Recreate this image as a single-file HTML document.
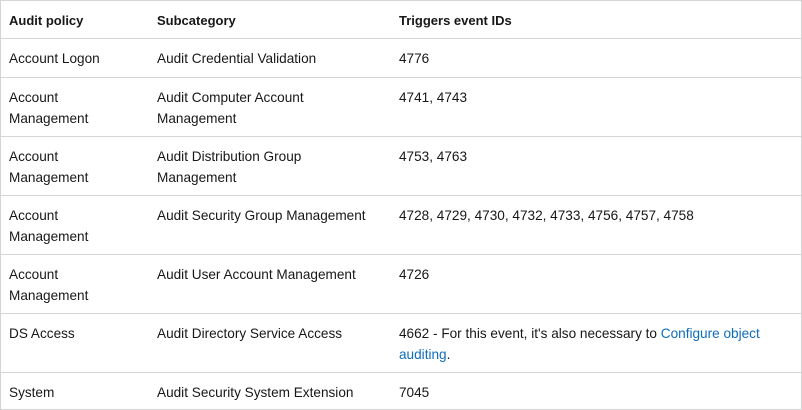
<!DOCTYPE html>
<html><head><meta charset="utf-8"><style>
body{margin:0;background:#fff;font-family:"Liberation Sans",sans-serif;font-size:13.6px;color:#171717;}
.t{position:absolute;left:0;top:0;width:800px;height:408px;border:1px solid #d4d4d4;}
.r{position:absolute;left:0;width:800px;border-bottom:1px solid #d4d4d4;box-sizing:border-box;}
.c{position:absolute;top:9px;line-height:21px;}
.a{left:8px;width:140px}.b{left:156px;width:235px}.d{left:398px;width:395px}
.h{font-weight:bold;font-size:13px}
a{color:#0f6cbd;text-decoration:none}
</style></head><body><div class="t">
<div class="r h" style="top:0;height:38px"><div class="c a">Audit policy</div><div class="c b">Subcategory</div><div class="c d">Triggers event IDs</div></div>
<div class="r" style="top:38px;height:39px"><div class="c a">Account Logon</div><div class="c b">Audit Credential Validation</div><div class="c d">4776</div></div>
<div class="r" style="top:77px;height:59px"><div class="c a">Account<br>Management</div><div class="c b">Audit Computer Account<br>Management</div><div class="c d">4741, 4743</div></div>
<div class="r" style="top:136px;height:59px"><div class="c a">Account<br>Management</div><div class="c b">Audit Distribution Group<br>Management</div><div class="c d">4753, 4763</div></div>
<div class="r" style="top:195px;height:59px"><div class="c a">Account<br>Management</div><div class="c b">Audit Security Group Management</div><div class="c d">4728, 4729, 4730, 4732, 4733, 4756, 4757, 4758</div></div>
<div class="r" style="top:254px;height:59px"><div class="c a">Account<br>Management</div><div class="c b">Audit User Account Management</div><div class="c d">4726</div></div>
<div class="r" style="top:313px;height:59px"><div class="c a">DS Access</div><div class="c b">Audit Directory Service Access</div><div class="c d">4662 - For this event, it's also necessary to <a>Configure object</a><br><a>auditing</a>.</div></div>
<div class="r" style="top:372px;height:36px;border-bottom:none"><div class="c a">System</div><div class="c b">Audit Security System Extension</div><div class="c d">7045</div></div>
</div></body></html>
